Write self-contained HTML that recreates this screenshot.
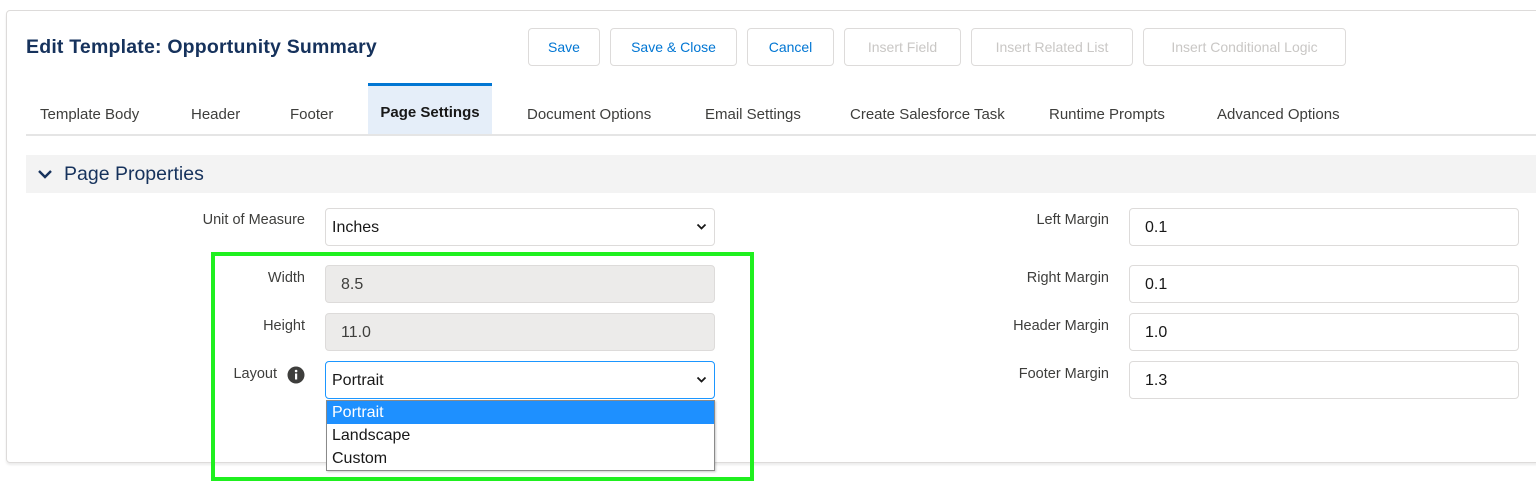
<!DOCTYPE html>
<html><head><meta charset="utf-8"><style>
*{box-sizing:border-box;margin:0;padding:0}
body{width:1536px;height:484px;background:#fff;font-family:"Liberation Sans",sans-serif;position:relative;overflow:hidden;color:#3e3e3c}
.abs{position:absolute}
.card{left:6px;top:10px;width:1540px;height:453px;border:1px solid #dddbda;border-radius:4px;box-shadow:0 2px 2px rgba(0,0,0,.08)}
.title{left:26px;top:36px;font-size:19.5px;font-weight:bold;color:#16325c;letter-spacing:0.2px}
.btn{top:28px;height:38px;border:1px solid #dddbda;border-radius:4px;font-size:14px;color:#0176d3;display:flex;align-items:center;justify-content:center;background:#fff}
.btn.d{color:#c9c7c5}
.tab{top:106px;font-size:15px;color:#3e3e3c}
.active{left:368px;top:83px;width:124px;height:51px;background:#e5eef9;border-top:3px solid #0176d3;font-weight:bold;color:#181818;font-size:15px;text-align:center;padding-top:18px}
.tabline{left:26px;top:134px;width:1510px;height:2px;background:#e5e5e5}
.sec{left:26px;top:155px;width:1510px;height:38px;background:#f3f3f3}
.sectitle{left:64px;top:163px;font-size:19.5px;color:#16325c}
.lbl{font-size:14.5px;color:#3e3e3c;text-align:right;width:220px}
.inp{height:38px;border:1px solid #dddbda;border-radius:4px;font-size:16px;color:#181818;padding:10px 0 0 15px;background:#fff}
.inp.g{background:#ecebea;color:#3e3e3c}
.green{left:211px;top:252px;width:543px;height:229px;border:4px solid #1ff01f}
.dd{left:326px;top:400px;width:389px;height:71px;border:1px solid #8a8a8a;background:#fff;font-size:16px;color:#181818;box-shadow:1px 1px 2px rgba(0,0,0,.2)}
.dd div{height:23px;padding:3px 0 0 5px}
</style></head><body>
<div class="abs card"></div>
<div class="abs title">Edit Template: Opportunity Summary</div>
<div class="abs btn" style="left:528px;width:72px">Save</div>
<div class="abs btn" style="left:610px;width:127px">Save &amp; Close</div>
<div class="abs btn" style="left:747px;width:87px">Cancel</div>
<div class="abs btn d" style="left:844px;width:117px">Insert Field</div>
<div class="abs btn d" style="left:971px;width:162px">Insert Related List</div>
<div class="abs btn d" style="left:1143px;width:203px">Insert Conditional Logic</div>

<div class="abs tab" style="left:40px">Template Body</div>
<div class="abs tab" style="left:191px">Header</div>
<div class="abs tab" style="left:290px">Footer</div>
<div class="abs active">Page Settings</div>
<div class="abs tab" style="left:527px">Document Options</div>
<div class="abs tab" style="left:705px">Email Settings</div>
<div class="abs tab" style="left:850px">Create Salesforce Task</div>
<div class="abs tab" style="left:1049px">Runtime Prompts</div>
<div class="abs tab" style="left:1217px">Advanced Options</div>
<div class="abs tabline"></div>

<div class="abs sec"></div>
<svg class="abs" style="left:37px;top:167px" width="16" height="14" viewBox="0 0 16 14"><path d="M2 4l6 6 6-6" fill="none" stroke="#16325c" stroke-width="2.4"/></svg>
<div class="abs sectitle">Page Properties</div>

<div class="abs lbl" style="left:85px;top:212px">Unit of Measure</div>
<div class="abs inp" style="left:325px;top:208px;width:390px;padding-left:6px">Inches</div>
<svg class="abs" style="left:696px;top:223px" width="11" height="8" viewBox="0 0 11 8"><path d="M1.5 1.5l4 4 4-4" fill="none" stroke="#181818" stroke-width="1.8"/></svg>

<div class="abs lbl" style="left:85px;top:270px">Width</div>
<div class="abs inp g" style="left:325px;top:265px;width:390px">8.5</div>
<div class="abs lbl" style="left:85px;top:318px">Height</div>
<div class="abs inp g" style="left:325px;top:313px;width:390px">11.0</div>
<div class="abs lbl" style="left:57px;top:366px">Layout</div>
<svg class="abs" style="left:287px;top:366px" width="18" height="18" viewBox="0 0 18 18"><circle cx="9" cy="9" r="8.5" fill="#3e3e3c"/><rect x="8" y="7.5" width="2.2" height="6" fill="#fff"/><circle cx="9.1" cy="5" r="1.3" fill="#fff"/></svg>
<div class="abs inp" style="left:325px;top:361px;width:390px;border-color:#1b96ff;padding-left:6px">Portrait</div>
<svg class="abs" style="left:696px;top:376px" width="11" height="8" viewBox="0 0 11 8"><path d="M1.5 1.5l4 4 4-4" fill="none" stroke="#181818" stroke-width="1.8"/></svg>
<div class="abs dd"><div style="background:#1e90ff;color:#fff">Portrait</div><div>Landscape</div><div>Custom</div></div>
<div class="abs green"></div>

<div class="abs lbl" style="left:889px;top:212px">Left Margin</div>
<div class="abs inp" style="left:1129px;top:208px;width:390px">0.1</div>
<div class="abs lbl" style="left:889px;top:270px">Right Margin</div>
<div class="abs inp" style="left:1129px;top:265px;width:390px">0.1</div>
<div class="abs lbl" style="left:889px;top:318px">Header Margin</div>
<div class="abs inp" style="left:1129px;top:313px;width:390px">1.0</div>
<div class="abs lbl" style="left:889px;top:366px">Footer Margin</div>
<div class="abs inp" style="left:1129px;top:361px;width:390px">1.3</div>
</body></html>
